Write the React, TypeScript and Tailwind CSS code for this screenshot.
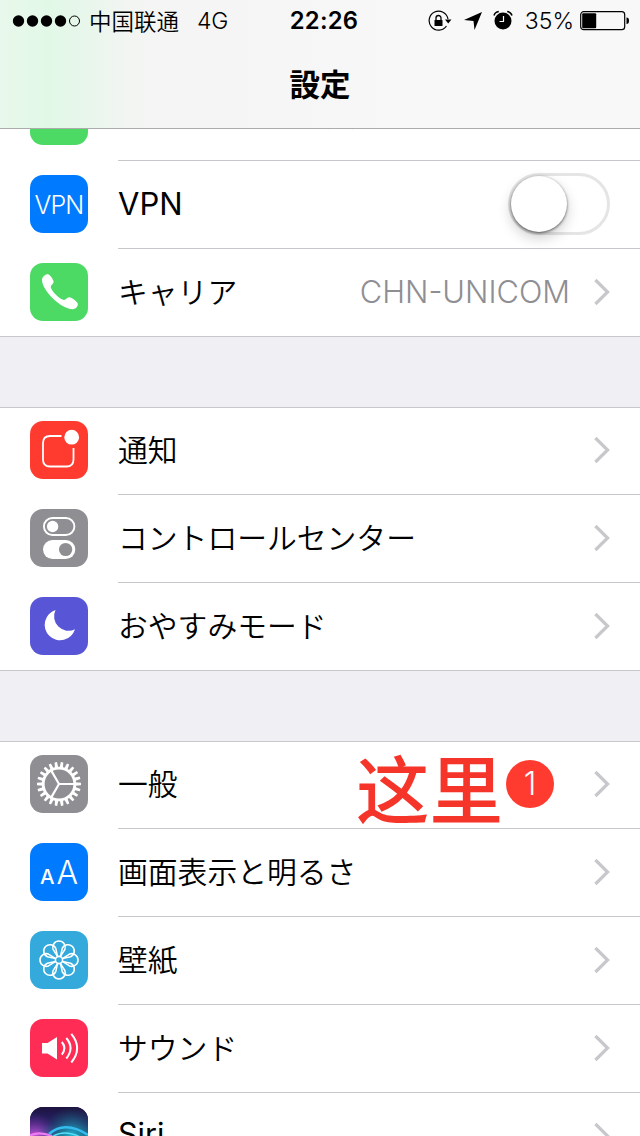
import type { ReactNode } from 'react';

const LATIN_CJK = "font-['Inter','Noto_Sans_CJK_JP',sans-serif]";

function Chevron() {
  return (
    <svg width="16" height="28" viewBox="0 0 16 28" fill="none" className="shrink-0">
      <path d="M1.400 2L13.600 14L1.400 26" stroke="#c7c7cc" strokeWidth="3.2" />
    </svg>
  );
}

interface RowProps {
  icon: ReactNode;
  iconClass: string;
  label: string;
  labelClass?: string;
  last?: boolean;
  first?: boolean;
  children?: ReactNode;
}

/**
 * Single settings row: rounded icon, label and trailing content
 */
function Row({ icon, iconClass, label, labelClass = 'text-[29.8px]', last, first, children }: RowProps) {
  return (
    <div
      className={`flex h-22 bg-white pl-[30px] ${last ? 'border-b border-[#c8c7cc]' : ''} ${first ? 'shadow-[inset_0_1px_0_#c8c7cc]' : ''}`}
    >
      <div className={`mt-3.5 flex size-[58px] shrink-0 items-center justify-center overflow-hidden rounded-[13px] ${iconClass}`}>
        {icon}
      </div>
      <div className={`ml-[30px] flex flex-1 items-center pr-[30px] pb-0.5 ${last ? '' : 'border-b border-[#c8c7cc]'}`}>
        <span className={`whitespace-nowrap leading-10 ${labelClass}`}>{label}</span>
        <div className="ml-auto flex items-center">{children ?? <Chevron />}</div>
      </div>
    </div>
  );
}

/* ---------- row icons ---------- */

function PhoneIcon() {
  return (
    <svg width="58" height="58" viewBox="0 0 58 58">
      <path
        d="M12 16.500C12.500 13 16 11 18 11.200C20 11.400 23.500 16.500 23.600 18.600C23.800 20.800 20.600 22.200 20.800 24.300C21.200 28 30.500 37 34 37C36 37 36.800 34 39.300 34.200C41.800 34.400 47.200 38.400 47.800 40.500C48.200 42.500 46.500 46.200 42.500 46.200C31 46.200 11.500 27 12 16.500Z"
        fill="#fff"
      />
    </svg>
  );
}

function NotificationIcon() {
  return (
    <svg width="58" height="58" viewBox="0 0 58 58" fill="none">
      <path
        d="M31.500 15H20Q13 15 13 22V38.500Q13 45.500 20 45.500H36.500Q43.500 45.500 43.500 38.500V27"
        stroke="#fff"
        strokeWidth="1.800"
      />
      <circle cx="41.700" cy="16.200" r="7.400" fill="#fff" />
    </svg>
  );
}

function ControlCenterIcon() {
  return (
    <svg width="58" height="58" viewBox="0 0 58 58" fill="none">
      <rect x="13.900" y="9" width="30.500" height="17" rx="8.500" stroke="#fff" strokeWidth="1.900" />
      <circle cx="22.600" cy="17.500" r="5.700" fill="#fff" />
      <rect x="13" y="31" width="32.300" height="19" rx="9.500" fill="#fff" />
      <circle cx="35.600" cy="40.500" r="6.600" fill="#8e8e93" />
    </svg>
  );
}

function MoonIcon() {
  return (
    <svg width="58" height="58" viewBox="0 0 58 58">
      <path d="M25.500 13A15.500 15.500 0 1 0 45 32.300A14.500 14.500 0 0 1 25.500 13Z" fill="#fff" />
    </svg>
  );
}

const TEETH = Array.from({ length: 22 }, (_, i) => (i * 360) / 22);

function GearIcon() {
  return (
    <svg width="58" height="58" viewBox="-29 -29 58 58" fill="none">
      {TEETH.map((a) => (
        <path key={a} d="M-1.700 -16L-1.200 -22H1.200L1.700 -16Z" fill="#fff" transform={`rotate(${a + 8})`} />
      ))}
      <circle r="15.800" stroke="#fff" strokeWidth="2.800" />
      {[90, 210, 330].map((a) => (
        <path key={a} d="M0 0V-15.500" stroke="#fff" strokeWidth="2.200" transform={`rotate(${a})`} />
      ))}
    </svg>
  );
}

const PETALS = [0, 45, 90, 135, 180, 225, 270, 315];

function FlowerIcon() {
  return (
    <svg width="58" height="58" viewBox="-29 -29 58 58" fill="none" stroke="#fff" strokeWidth="1.600">
      {PETALS.map((a) => (
        <path
          key={a}
          d="M-1.300 -3.400L-5.900 -10.500A6.300 6.300 0 1 1 5.900 -10.500L1.300 -3.400"
          transform={`rotate(${a})`}
        />
      ))}
      <circle r="3.600" />
    </svg>
  );
}

function SoundIcon() {
  return (
    <svg width="58" height="58" viewBox="0 0 58 58" fill="none">
      <path d="M12 24H17.500L27 18V40.500L17.500 34.500H12Z" fill="#fff" />
      <g stroke="#fff" strokeWidth="2">
        <path d="M31.800 23Q37 29 31.800 35.600" />
        <path d="M36.300 19Q44.800 29 36.300 39.500" />
        <path d="M41.300 14.800Q53 29 41.300 43.500" />
      </g>
    </svg>
  );
}

function SiriIcon() {
  return (
    <svg width="58" height="58" viewBox="0 0 58 58" fill="none">
      <defs>
        <linearGradient id="siriBg" x1="0" y1="0" x2="0" y2="1">
          <stop offset="0" stopColor="#1d1340" />
          <stop offset=".3" stopColor="#27246a" />
          <stop offset=".55" stopColor="#1a6f9c" />
        </linearGradient>
        <radialGradient id="siriPink" cx=".08" cy=".52" r=".42">
          <stop offset="0" stopColor="#d94bdc" />
          <stop offset="1" stopColor="#6a2a9a" stopOpacity="0" />
        </radialGradient>
        <radialGradient id="siriTeal" cx=".72" cy=".5" r=".5">
          <stop offset="0" stopColor="#1fb4d4" />
          <stop offset="1" stopColor="#14605f" stopOpacity="0" />
        </radialGradient>
      </defs>
      <rect width="58" height="58" fill="url(#siriBg)" />
      <rect width="58" height="58" fill="url(#siriPink)" />
      <rect width="58" height="58" fill="url(#siriTeal)" />
      <path d="M0 28.500Q9 24 22 29" stroke="#f07bf2" strokeWidth="2.200" />
      <path d="M19 27Q35 13 58 28" stroke="#35bdf0" strokeWidth="2.500" />
      <path d="M22 30Q34 22 50 30" stroke="#58dff5" strokeWidth="1.500" />
    </svg>
  );
}

/* ---------- status bar ---------- */

function StatusBar() {
  return (
    <div className="grid h-10 grid-cols-[1fr_auto_1fr] items-center pr-2.5 pl-3 text-[22px] leading-10">
      <div className="flex items-center">
        <svg width="70" height="14" viewBox="0 0 70 14">
          {[6.5, 20.5, 34.5, 48.5].map((x) => (
            <circle key={x} cx={x} cy="7" r="5.700" />
          ))}
          <circle cx="62.500" cy="7" r="5" fill="none" stroke="#000" />
        </svg>
        <span className="ml-[7px] pb-0.5 font-['Noto_Sans_CJK_SC',sans-serif] text-[22.5px] font-[350]">中国联通</span>
        <span className="ml-[18px] text-[23px] font-[350] tracking-[-0.3px]">4G</span>
      </div>
      <span className="mr-[-6px] text-[23.8px] font-semibold tracking-[0.2px]">22:26</span>
      <div className="flex items-center justify-end">
        <svg width="24" height="22" viewBox="0 0 24 22" fill="none" className="shrink-0">
          <path d="M18.500 16A9.500 9.500 0 1 1 20 9" stroke="#000" strokeWidth="1.200" />
          <path d="M17 9.500H23.500L20.200 13.500Z" fill="#000" />
          <rect x="6.500" y="10" width="8" height="6" rx=".5" fill="#000" />
          <path d="M8 10V8A2.500 2.500 0 0 1 13 8V10" stroke="#000" strokeWidth="1.300" />
        </svg>
        <svg width="18" height="18" viewBox="0 0 18 18" className="ml-3 shrink-0">
          <path d="M18 0L10.500 18L9.500 9L0 8Z" />
        </svg>
        <svg width="20" height="20" viewBox="0 0 20 20" fill="none" className="mb-0.5 ml-[11px] shrink-0">
          <circle cx="10" cy="11" r="8.500" fill="#000" />
          <path d="M1 5.500Q2 2 5.800 1.500M19 5.500Q18 2 14.200 1.500" stroke="#000" strokeWidth="1.500" />
          <path d="M10.500 6V11.500H6.500" stroke="#fff" strokeWidth="1.200" />
        </svg>
        <span className="ml-3 text-[23px] font-[350]">35%</span>
        <svg width="50" height="20" viewBox="0 0 50 20" fill="none" className="ml-1.5 shrink-0">
          <rect x=".7" y=".7" width="44" height="18" rx="3" stroke="#000" strokeWidth="1.200" />
          <rect x="2.200" y="2.200" width="14" height="15" rx="1" fill="#000" />
          <path d="M46.500 6.500Q49 6.500 49 9.700Q49 13 46.500 13Z" fill="#000" />
        </svg>
      </div>
    </div>
  );
}

export default function App() {
  return (
    <div className={`relative h-[1136px] w-[640px] overflow-hidden bg-[#efeff4] text-black ${LATIN_CJK}`}>
      {/* Translucent navigation bar over the scrolled list */}
      <header className="absolute inset-x-0 top-0 z-10 h-[129px] border-b border-[#acacac] bg-[linear-gradient(90deg,#e9f8ec_0px,#e1f8e7_50px,#e9f6ec_90px,#f3f5f3_130px,#f5f5f5_230px,#f8f8f8_430px)]">
        <StatusBar />
        <h1 className="pt-[21px] text-center font-['Noto_Sans_CJK_JP',sans-serif] text-[30.5px] leading-11 font-bold">設定</h1>
      </header>

      <main className="flex flex-col gap-[70px] pt-[73px] font-[350]">
        <section>
          <Row icon={null} iconClass="bg-[#4cd964]" label="インターネット共有" labelClass="text-[29.8px] pb-0.5" />
          <Row
            icon={<span className="pt-1 text-[25px] font-[350] tracking-[-0.8px] text-white">VPN</span>}
            iconClass="bg-[#007aff]"
            label="VPN"
            labelClass="text-[31px] font-normal"
          >
            <div className="flex h-[62px] w-[102px] items-center rounded-full border-3 border-[#e5e5e5] bg-white">
              <div className="size-14 rounded-full bg-white shadow-[0_1px_3px_rgba(0,0,0,0.6),0_6px_14px_rgba(0,0,0,0.2)]" />
            </div>
          </Row>
          <Row icon={<PhoneIcon />} iconClass="bg-[#4cd964]" label="キャリア" last>
            <span className="mr-6 pt-0.5 text-[30.8px] text-[#8e8e93]">CHN-UNICOM</span>
            <Chevron />
          </Row>
        </section>

        <section>
          <Row icon={<NotificationIcon />} iconClass="bg-[#ff3b30]" label="通知" first />
          <Row icon={<ControlCenterIcon />} iconClass="bg-[#8e8e93]" label="コントロールセンター" />
          <Row icon={<MoonIcon />} iconClass="bg-[#5856d6]" label="おやすみモード" last />
        </section>

        <section>
          <Row icon={<GearIcon />} iconClass="bg-[#8e8e93]" label="一般" first>
            <span className="mr-[3px] pt-1 font-['Noto_Sans_CJK_SC',sans-serif] text-[73.5px] leading-[80px] font-medium text-[#f6352a]">这里</span>
            <span className="mr-10 flex size-12 items-center justify-center rounded-full bg-[#ff3b30] text-[32px] font-light text-white">1</span>
            <Chevron />
          </Row>
          <Row
            icon={
              <span className="flex items-baseline gap-0.5 pt-0.5 text-white">
                <span className="text-[20.5px] font-medium">A</span>
                <span className="text-[32px] font-[350]">A</span>
              </span>
            }
            iconClass="bg-[#007aff]"
            label="画面表示と明るさ"
          />
          <Row icon={<FlowerIcon />} iconClass="bg-[#34aadc]" label="壁紙" />
          <Row icon={<SoundIcon />} iconClass="bg-[#ff2d55]" label="サウンド" />
          <Row icon={<SiriIcon />} iconClass="bg-[#1d1340]" label="Siri" labelClass="text-[30.5px] font-normal pb-1" />
        </section>
      </main>
    </div>
  );
}
